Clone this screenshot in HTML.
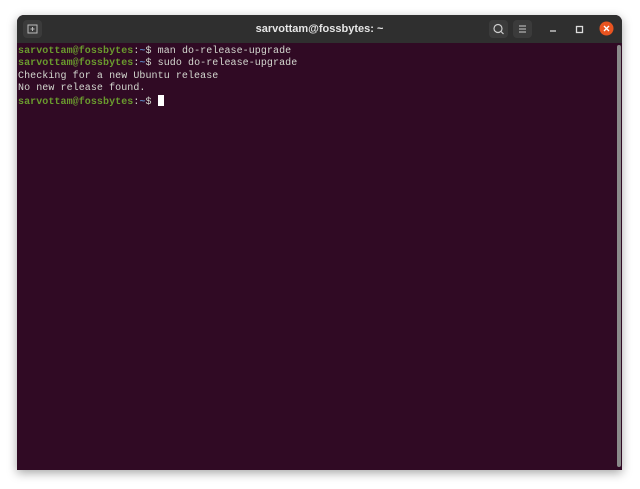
<!DOCTYPE html>
<html><head><style>
body{margin:0;width:640px;height:489px;background:#fff;position:relative;overflow:hidden;font-family:"Liberation Sans",sans-serif}
.win{position:absolute;left:17px;top:15px;width:605px;height:455px;border-radius:7px 7px 0 0;box-shadow:0 3px 10px rgba(0,0,0,.35);overflow:hidden;background:#300a24}
.tb{height:28px;background:#2f2f2f;position:relative;color:#e6e6e6}
.title{position:absolute;left:0;right:0;top:8px;text-align:center;font-size:11px;font-weight:bold}
.btn{position:absolute;top:5px;width:19px;height:18px;background:#3b3b3b;border-radius:4px}
.term{position:absolute;left:1px;top:31px;font-family:"Liberation Mono",monospace;font-size:10px;letter-spacing:0.07px;line-height:12.3px;color:#d3d7cf;white-space:pre}
.g{color:#6a9a2e;font-weight:bold}.b{color:#5b7fb8;font-weight:bold}
.cur{display:inline-block;width:6px;height:11px;background:#fff;vertical-align:-2px}
.sb{position:absolute;right:1px;top:30px;width:4px;height:422px;background:#8a8a8a;border-radius:2px}
</style></head><body>
<div class="win">
<div class="tb">
<div class="btn" style="left:6px"><svg width="19" height="18"><rect x="5" y="5" width="9" height="8" fill="none" stroke="#bbb" stroke-width="1"/><path d="M9.5 7v4M7.5 9h4" stroke="#bbb"/></svg></div>
<div class="title">sarvottam@fossbytes: ~</div>
<div class="btn" style="left:472px"><svg width="19" height="18"><circle cx="9" cy="8.5" r="4" fill="none" stroke="#ccc" stroke-width="1.2"/><path d="M12 11.5l2.5 2.5" stroke="#ccc" stroke-width="1.2"/></svg></div>
<div class="btn" style="left:496px"><svg width="19" height="18"><path d="M6 6h7M6 9h7M6 12h7" stroke="#ccc"/></svg></div>
<svg style="position:absolute;left:530px;top:8px" width="14" height="14"><path d="M3 8h6" stroke="#ddd" stroke-width="1.3"/></svg>
<svg style="position:absolute;left:556px;top:8px" width="14" height="14"><rect x="3.5" y="3.5" width="6" height="6" fill="none" stroke="#ddd" stroke-width="1.3"/></svg>
<svg style="position:absolute;left:582px;top:6px" width="15" height="15"><circle cx="7.5" cy="7.5" r="7" fill="#e95420"/><path d="M5 5l5 5M10 5l-5 5" stroke="#fff" stroke-width="1.4"/></svg>
</div>
<div class="term"><span class="g">sarvottam@fossbytes</span>:<span class="b">~</span>$ man do-release-upgrade
<span class="g">sarvottam@fossbytes</span>:<span class="b">~</span>$ sudo do-release-upgrade
Checking for a new Ubuntu release
No new release found.
<span class="g">sarvottam@fossbytes</span>:<span class="b">~</span>$ <span class="cur"></span></div>
<div class="sb"></div>
</div>
</body></html>
